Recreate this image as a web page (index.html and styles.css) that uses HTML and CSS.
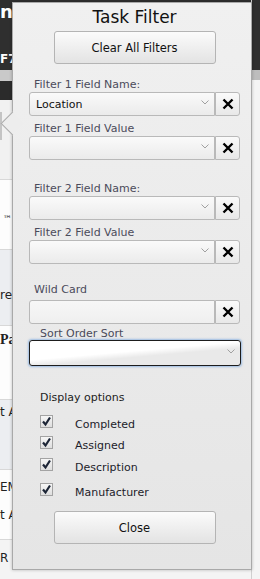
FILE: index.html
```html
<html>
<head>
    <link rel="stylesheet" href="styles.css">
</head>

<body>
    <div class="app">
        <div class="topbar">
            <div class="cell brand"><span>n</span></div>
            <div class="cell key"><span>F7</span></div>
        </div>
        <div class="band"></div>
        <div class="toolbar"></div>
        <div class="row r1"><span class="tab"></span></div>
        <div class="row r2"><div class="cell tm"><span>™</span></div></div>
        <div class="row r3"><div class="cell"><span>re</span></div></div>
        <div class="row r4"><div class="cell"><b class="serif">Part</b></div></div>
        <div class="row r5"><div class="cell"><span>t Asset</span></div></div>
        <div class="row r6">
            <div class="cell"><span>EMEA</span></div>
            <div class="cell"><span>t Asset</span></div>
        </div>
        <div class="row r7"><div class="cell"><span>R WAN</span></div></div>
    </div>

    <div class="side"></div>

    <div class="popup">
        <div class="title">Task Filter</div>
        <button class="btn clear-all">Clear All Filters</button>

        <div class="label first">Filter 1 Field Name:</div>
        <div class="field">
            <div class="select"><span>Location</span><svg class="chev" width="8" height="5" viewBox="0 0 8 5"><polyline points="0.5,0.5 4,4 7.5,0.5" fill="none" stroke="#a0a0a0" stroke-width="1"/></svg></div>
            <div class="x"><svg width="12" height="12" viewBox="0 0 12 12"><path d="M1.5 1.5L10.5 10.5M10.5 1.5L1.5 10.5" stroke="#000" stroke-width="2.4"/></svg></div>
        </div>

        <div class="label">Filter 1 Field Value</div>
        <div class="field">
            <div class="select"><span></span><svg class="chev" width="8" height="5" viewBox="0 0 8 5"><polyline points="0.5,0.5 4,4 7.5,0.5" fill="none" stroke="#a0a0a0" stroke-width="1"/></svg></div>
            <div class="x"><svg width="12" height="12" viewBox="0 0 12 12"><path d="M1.5 1.5L10.5 10.5M10.5 1.5L1.5 10.5" stroke="#000" stroke-width="2.4"/></svg></div>
        </div>

        <div class="label group">Filter 2 Field Name:</div>
        <div class="field">
            <div class="select"><span></span><svg class="chev" width="8" height="5" viewBox="0 0 8 5"><polyline points="0.5,0.5 4,4 7.5,0.5" fill="none" stroke="#a0a0a0" stroke-width="1"/></svg></div>
            <div class="x"><svg width="12" height="12" viewBox="0 0 12 12"><path d="M1.5 1.5L10.5 10.5M10.5 1.5L1.5 10.5" stroke="#000" stroke-width="2.4"/></svg></div>
        </div>

        <div class="label">Filter 2 Field Value</div>
        <div class="field">
            <div class="select"><span></span><svg class="chev" width="8" height="5" viewBox="0 0 8 5"><polyline points="0.5,0.5 4,4 7.5,0.5" fill="none" stroke="#a0a0a0" stroke-width="1"/></svg></div>
            <div class="x"><svg width="12" height="12" viewBox="0 0 12 12"><path d="M1.5 1.5L10.5 10.5M10.5 1.5L1.5 10.5" stroke="#000" stroke-width="2.4"/></svg></div>
        </div>

        <div class="label wild">Wild Card</div>
        <div class="field wild-field">
            <div class="select input"></div>
            <div class="x"><svg width="12" height="12" viewBox="0 0 12 12"><path d="M1.5 1.5L10.5 10.5M10.5 1.5L1.5 10.5" stroke="#000" stroke-width="2.4"/></svg></div>
        </div>

        <div class="label sort">Sort Order Sort</div>
        <div class="sort-select"><svg class="chev" width="8" height="5" viewBox="0 0 8 5"><polyline points="0.5,0.5 4,4 7.5,0.5" fill="none" stroke="#a0a0a0" stroke-width="1"/></svg></div>

        <div class="options-title">Display options</div>
        <div class="options">
            <div class="option"><span class="check"><svg width="11" height="11" viewBox="0 0 11 11"><path d="M2 5.5L4.5 8.5L9 1.5" fill="none" stroke="#1c2536" stroke-width="2.2"/></svg></span><span class="opt-label">Completed</span></div>
            <div class="option"><span class="check"><svg width="11" height="11" viewBox="0 0 11 11"><path d="M2 5.5L4.5 8.5L9 1.5" fill="none" stroke="#1c2536" stroke-width="2.2"/></svg></span><span class="opt-label">Assigned</span></div>
            <div class="option"><span class="check"><svg width="11" height="11" viewBox="0 0 11 11"><path d="M2 5.5L4.5 8.5L9 1.5" fill="none" stroke="#1c2536" stroke-width="2.2"/></svg></span><span class="opt-label">Description</span></div>
            <div class="option"><span class="check"><svg width="11" height="11" viewBox="0 0 11 11"><path d="M2 5.5L4.5 8.5L9 1.5" fill="none" stroke="#1c2536" stroke-width="2.2"/></svg></span><span class="opt-label">Manufacturer</span></div>
        </div>

        <button class="btn close">Close</button>
    </div>
</body>
</html>
```

FILE: styles.css
```css
body{
    margin: 0;
    width: 260px;
    height: 579px;
    overflow: hidden;
    position: relative;
    font-family: "DejaVu Sans", Verdana, sans-serif;
    background: #f3f4f6;
}

/* background app, mostly hidden behind the popup */
.app{
    display: flex;
    flex-direction: column;
    height: 579px;
}
.topbar{
    height: 70px;
    background: #2f2f2f;
    color: white;
    font-weight: bold;
    display: flex;
    flex-direction: column;
    justify-content: space-between;
}
.cell{
    display: flex;
    white-space: nowrap;
    font-size: 12px;
    color: #222;
}
.brand{
    color: white;
    font-size: 18px;
    margin-top: 1px;
}
.key{
    color: white;
    font-size: 12px;
    margin-bottom: 4px;
}
.band{
    height: 11px;
    background: #c9c9c9;
}
.toolbar{
    height: 19px;
    background: #2b2b2b;
}
.row{
    border-bottom: 1px solid #d8d8d8;
    box-sizing: border-box;
    display: flex;
    flex-direction: column;
}
.r1{ height: 80px; background: #f1f1f1; }
.r1 .tab{
    width: 2px;
    height: 28px;
    margin-top: 12px;
    background: #c4c4c4;
}
.r2{ height: 70px; background: #fdfdfd; padding-top: 34px; }
.cell.tm{ font-size: 9px; padding-left: 3px; }
.r3{ height: 76px; background: #eceef1; padding-top: 38px; }
.r4{ height: 74px; background: #fdfdfd; padding-top: 6px; }
.serif{
    font-family: "Liberation Serif", serif;
    font-size: 14px;
}
.r5{ height: 70px; background: #eceef1; padding-top: 5px; }
.r6{ height: 70px; background: #fdfdfd; padding-top: 10px; gap: 14px; }
.r7{ height: 39px; background: #f4f4f4; padding-top: 11px; border: none; }

.side{
    position: absolute;
    top: 0;
    right: 0;
    width: 8px;
    height: 579px;
    background: linear-gradient(#2f2f2f 0, #2f2f2f 70px, #bdbdbd 70px, #bdbdbd 80px, #f4f4f4 80px);
    border-left: 1px solid #d0d0d0;
}

/* popup */
.popup{
    position: absolute;
    top: 2px;
    left: 12px;
    width: 240px;
    height: 568px;
    box-sizing: border-box;
    border: 1px solid #a9a9a9;
    background: linear-gradient(#f0f0f0, #e5e5e5);
    padding: 0 11px 0 16px;
    box-shadow: 0 0 3px rgba(0,0,0,0.25);
    display: flex;
    flex-direction: column;
}
.popup::before{
    content: "";
    position: absolute;
    left: -9px;
    top: 112px;
    width: 16px;
    height: 16px;
    transform: rotate(45deg);
    background: #ededed;
    border-left: 1px solid #a9a9a9;
    border-bottom: 1px solid #a9a9a9;
}
.title{
    text-align: center;
    font-size: 17px;
    line-height: 20px;
    margin-top: 4px;
    color: #111;
}
.btn{
    display: block;
    width: 162px;
    height: 33px;
    margin: 4px auto 0;
    box-sizing: border-box;
    border: 1px solid #b4b4b4;
    border-radius: 3px;
    background: linear-gradient(#fbfbfb, #e3e3e3);
    font-family: "DejaVu Sans", Verdana, sans-serif;
    font-size: 11.5px;
    color: #111;
    padding: 0;
}
.label{
    font-size: 11px;
    line-height: 13px;
    color: #4b4b5b;
    padding-left: 5px;
    margin-top: 6px;
}
.label.first{ margin-top: 14px; }
.label.group{ margin-top: 22px; }
.label.wild{ margin-top: 19px; margin-bottom: 3px; }
.label.sort{ margin-top: 3px; padding-left: 11px; }
.field{
    display: flex;
    height: 24px;
    margin-top: 1px;
}
.select{
    flex: 1;
    box-sizing: border-box;
    border: 1px solid #b9b9b9;
    border-radius: 3px 0 0 3px;
    background: linear-gradient(#fafafa, #ebebeb);
    display: flex;
    align-items: center;
    justify-content: space-between;
    padding: 0 5px 0 6px;
    font-size: 11px;
    color: #111;
}
.chev{
    margin-bottom: 3px;
}
.select.input{
    background: linear-gradient(#f7f7f7, #efefef);
}
.x{
    width: 25px;
    box-sizing: border-box;
    border: 1px solid #b9b9b9;
    border-radius: 0 3px 3px 0;
    background: linear-gradient(#fafafa, #e8e8e8);
    display: flex;
    align-items: center;
    justify-content: center;
}
.sort-select{
    height: 26px;
    width: 212px;
    box-sizing: border-box;
    border: 1px solid #1d1d1d;
    border-radius: 3px;
    box-shadow: 0 0 2px 1px rgba(90,150,220,0.55);
    background: linear-gradient(175deg, #ffffff 45%, #e9e9e9 60%);
    display: flex;
    align-items: center;
    justify-content: flex-end;
    padding-right: 5px;
}
.options-title{
    font-size: 11px;
    line-height: 13px;
    color: #222;
    padding-left: 11px;
    margin-top: 25px;
}
.options{
    display: flex;
    flex-direction: column;
    padding-left: 11px;
}
.option{
    display: flex;
    align-items: flex-start;
    gap: 22px;
}
.option:nth-child(1){ margin-top: 11px; }
.option:nth-child(2){ margin-top: 5px; }
.option:nth-child(3){ margin-top: 6px; }
.option:nth-child(4){ margin-top: 9px; }
.check{
    width: 13px;
    height: 13px;
    box-sizing: border-box;
    border: 1px solid #a3a3a3;
    background: linear-gradient(#f6f6f6, #dedede);
    display: flex;
    align-items: center;
    justify-content: center;
}
.opt-label{
    font-size: 11px;
    line-height: 13px;
    margin-top: 3px;
    color: #1c1c2a;
}
.btn.close{
    margin-top: 12px;
}
```
